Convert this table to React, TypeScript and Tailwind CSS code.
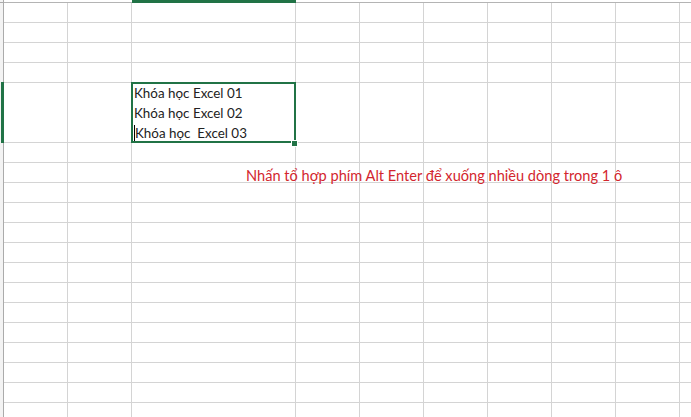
import React from "react";

const colWidths = [64, 64, 164, 64, 64, 64, 64, 64, 64, 64];
const rowHeights = [20, 20, 20, 20, 60, 20, 20, 20, 20, 20, 20, 20, 20, 20, 20, 20, 20, 20, 20];

function SelectedCell() {
  return (
    <div className="relative h-full w-full">
      <div className="pl-[2px] leading-[20px] text-[13.4px] text-[#222] whitespace-pre">
        <div>Khóa học Excel 01</div>
        <div>Khóa học Excel 02</div>
        <div className="flex items-center">
          <span className="inline-block w-px h-[17px] bg-black" />
          <span>Khóa học  Excel 03</span>
        </div>
      </div>
      <div className="absolute left-[-1px] top-[-1px] right-[-1px] bottom-[-1px] border-2 border-[#217346] pointer-events-none" />
      <div className="absolute left-[159px] top-[57px] w-[7px] h-[7px] bg-[#217346] border border-white" />
    </div>
  );
}

export default function App() {
  return (
    <div
      className="relative w-[691px] h-[417px] overflow-hidden bg-white"
      style={{ fontFamily: "Lato, 'Noto Sans', sans-serif" }}
    >
      <div className="flex h-[3px]">
        <div className="w-[4px] shrink-0 border-r border-b border-[#ababab] bg-[#f3f3f3]" />
        {colWidths.map((w, i) =>
          i === 2 ? (
            <div key={i} className="shrink-0 h-[3px] bg-[#217346]" style={{ width: w }} />
          ) : (
            <div key={i} className="shrink-0 h-[3px] border-b border-[#b4b4b4]" style={{ width: w }} />
          )
        )}
      </div>
      {rowHeights.map((h, r) => (
        <div key={r} className="flex" style={{ height: h }}>
          <div className="w-[4px] shrink-0 relative border-r border-[#ababab] bg-[#f3f3f3]">
            {r === 4 && <div className="absolute left-[1px] top-[-1px] bottom-0 w-[3px] bg-[#217346]" />}
          </div>
          {colWidths.map((w, c) => (
            <div
              key={c}
              className={
                r === 4 && c === 2
                  ? "shrink-0 border-r border-b border-[#d4d4d4] relative z-10"
                  : "shrink-0 border-r border-b border-[#d4d4d4]"
              }
              style={{ width: w }}
            >
              {r === 4 && c === 2 ? <SelectedCell /> : null}
            </div>
          ))}
        </div>
      ))}
      <div className="absolute left-[246px] top-[166px] leading-[20px] text-[14.6px] text-[#d3262e] whitespace-nowrap">
        Nhấn tổ hợp phím Alt Enter để xuống nhiều dòng trong 1 ô
      </div>
    </div>
  );
}
